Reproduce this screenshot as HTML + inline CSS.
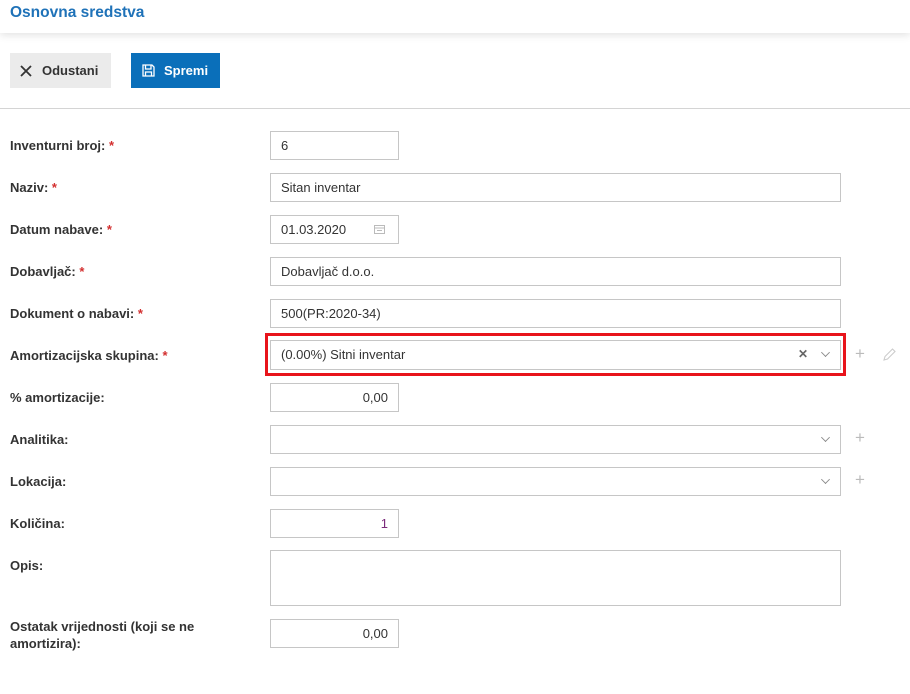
<!DOCTYPE html>
<html><head><meta charset="utf-8"><style>
*{box-sizing:border-box;margin:0;padding:0}
body{width:910px;height:694px;background:#fff;font-family:"Liberation Sans",sans-serif;font-size:13px;color:#333;position:relative;overflow:hidden}
.hdr{position:absolute;left:0;top:0;width:910px;height:33px;background:#fff;box-shadow:0 2px 8px rgba(0,0,0,.12)}
.hdr h1{position:absolute;left:10px;top:4px;font-size:15.5px;color:#1f72b8;font-weight:bold}
.btn{position:absolute;top:53px;height:35px;line-height:35px;font-weight:bold;font-size:13px}
.div{position:absolute;left:0;top:108px;width:910px;height:1px;background:#d4d4d4}
.lab{position:absolute;left:10px;font-weight:bold;color:#333;font-size:13px}
.lab b{color:#d32f2f}
.in{position:absolute;left:270px;height:29px;border:1px solid #c6c6c6;background:#fff;padding-left:10px;line-height:27px;font-size:13px;color:#333}
.n{width:129px}.w{width:571px}
.r{text-align:right;padding-right:10px}
.chev{position:absolute;right:11px;top:8px;width:7px;height:7px;border-right:1px solid #888;border-bottom:1px solid #888;transform:rotate(45deg) scale(.9);}
.plus{position:absolute;left:855px;color:#bbb;font-size:17px}
</style></head><body>
<div class="hdr"><h1>Osnovna sredstva</h1></div>
<div class="btn" style="left:10px;width:101px;background:#ebebeb;color:#333"><svg style="position:absolute;left:10px;top:12px" width="12" height="12" viewBox="0 0 12 12"><path d="M1 1L11 11M11 1L1 11" stroke="#333" stroke-width="1.8"/></svg><span style="position:absolute;left:32px">Odustani</span></div>
<div class="btn" style="left:131px;width:89px;background:#0a6fba;color:#fff"><svg style="position:absolute;left:11px;top:11px" width="13" height="13" viewBox="0 0 13 13"><path d="M1 1H10L12 3V12H1Z M3.5 1V5H9V1 M3.5 12V8H9.5V12" fill="none" stroke="#fff" stroke-width="1.3"/></svg><span style="position:absolute;left:33px">Spremi</span></div>
<div class="div"></div>

<div class="lab" style="top:138px">Inventurni broj: <b>*</b></div>
<div class="in n" style="top:131px">6</div>
<div class="lab" style="top:180px">Naziv: <b>*</b></div>
<div class="in w" style="top:173px">Sitan inventar</div>
<div class="lab" style="top:222px">Datum nabave: <b>*</b></div>
<div class="in n" style="top:215px">01.03.2020<svg style="position:absolute;left:103px;top:9px" width="11" height="9" viewBox="0 0 11 9"><rect x="0.5" y="0.5" width="10" height="8" fill="none" stroke="#bbb"/><path d="M0.5 3H10.5M3 5.5H8" stroke="#bbb"/></svg></div>
<div class="lab" style="top:264px">Dobavljač: <b>*</b></div>
<div class="in w" style="top:257px">Dobavljač d.o.o.</div>
<div class="lab" style="top:306px">Dokument o nabavi: <b>*</b></div>
<div class="in w" style="top:299px">500(PR:2020-34)</div>
<div class="lab" style="top:348px">Amortizacijska skupina: <b>*</b></div>
<div style="position:absolute;left:265px;top:333px;width:581px;height:43px;border:3px solid #e8141b"></div>
<div class="in w" style="top:340px;height:30px">(0.00%) Sitni inventar<span style="position:absolute;right:32px;top:0;color:#666;font-size:12px;font-weight:bold">✕</span><div class="chev"></div></div>
<div class="plus" style="top:344px">+</div>
<svg style="position:absolute;left:883px;top:348px" width="13" height="13" viewBox="0 0 13 13"><path d="M1 12L2 8.5L9.5 1L12 3.5L4.5 11Z" fill="none" stroke="#ccc" stroke-width="1.1"/></svg>
<div class="lab" style="top:390px">% amortizacije:</div>
<div class="in n r" style="top:383px">0,00</div>
<div class="lab" style="top:432px">Analitika:</div>
<div class="in w" style="top:425px"><div class="chev"></div></div>
<div class="plus" style="top:428px">+</div>
<div class="lab" style="top:474px">Lokacija:</div>
<div class="in w" style="top:467px"><div class="chev"></div></div>
<div class="plus" style="top:470px">+</div>
<div class="lab" style="top:516px">Količina:</div>
<div class="in n r" style="top:509px;color:#7a2a7a">1</div>
<div class="lab" style="top:558px">Opis:</div>
<div class="in w" style="top:550px;height:56px"></div>
<div class="lab" style="top:618px;line-height:17px">Ostatak vrijednosti (koji se ne<br>amortizira):</div>
<div class="in n r" style="top:619px">0,00</div>
</body></html>
